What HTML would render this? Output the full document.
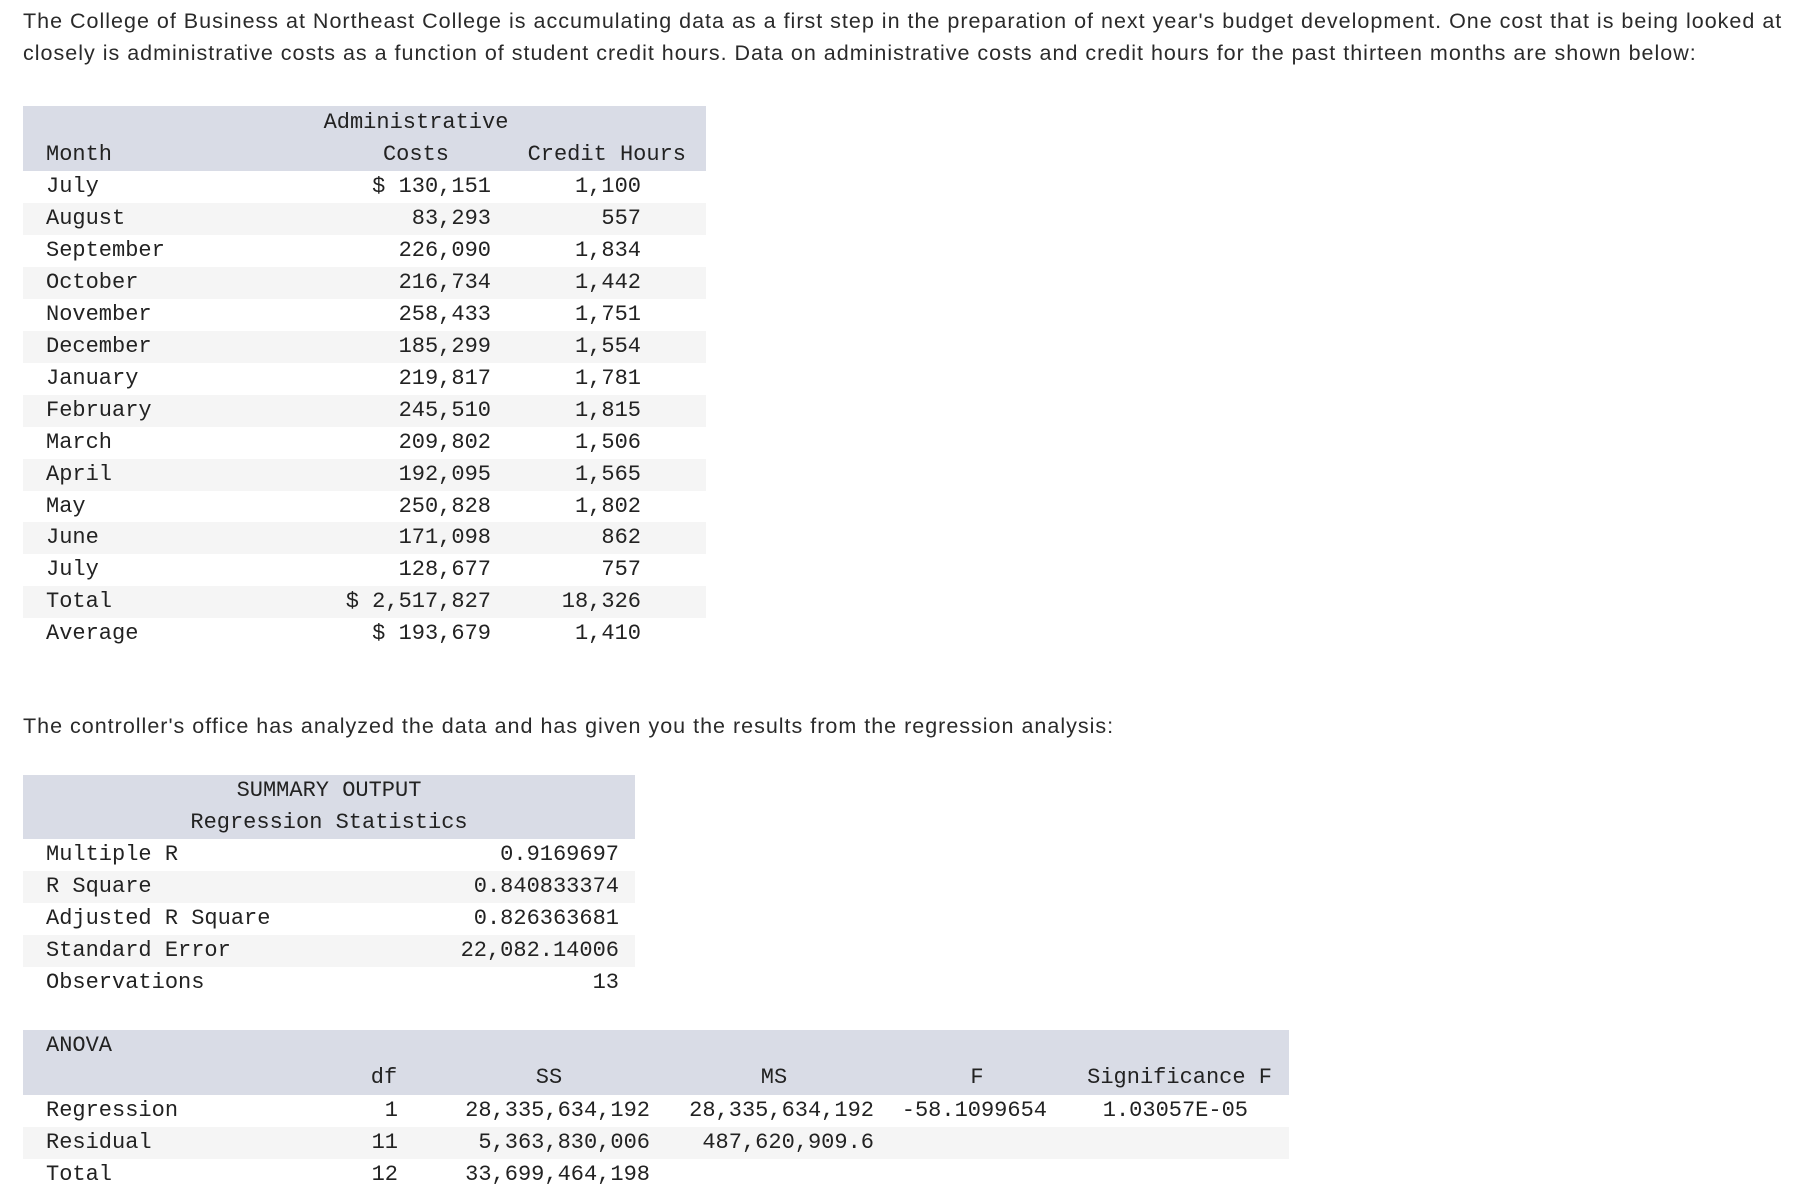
<!DOCTYPE html>
<html><head><meta charset="utf-8"><style>
body{margin:0;width:1798px;height:1202px;background:#fff;position:relative;overflow:hidden;color:#222}
.p{position:absolute;left:23px;font-family:"Liberation Sans",Arial,sans-serif;font-size:21.5px;letter-spacing:1px;white-space:nowrap;color:#2a2a2a}
.t{position:absolute;font-family:"Liberation Mono","DejaVu Sans Mono",monospace;font-size:22px;color:#222}
.r{position:absolute;left:0;right:0;height:32px;line-height:32px}
.h{background:#d9dce6}
.g{background:#f5f5f5}
.c{position:absolute;top:0;white-space:pre}
</style></head><body>
<div class="p" style="top:9px">The College of Business at Northeast College is accumulating data as a first step in the preparation of next year's budget development. One cost that is being looked at</div>
<div class="p" style="top:41px">closely is administrative costs as a function of student credit hours. Data on administrative costs and credit hours for the past thirteen months are shown below:</div>

<div class="t" style="left:23px;top:106px;width:683px;height:545px">
<div class="r h" style="top:0;height:65px"></div>
<div class="c" style="left:243px;width:300px;text-align:center;top:1px;line-height:32px">Administrative</div>
<div class="c" style="left:23px;top:33px;line-height:32px">Month</div>
<div class="c" style="left:243px;width:300px;text-align:center;top:33px;line-height:32px">Costs</div>
<div class="c" style="right:20px;top:33px;line-height:32px">Credit Hours</div>
<div id="rows"></div>
</div>

<div class="p" style="top:714px">The controller's office has analyzed the data and has given you the results from the regression analysis:</div>

<div class="t" style="left:23px;top:775px;width:612px;height:230px">
<div class="r h" style="top:0;height:64px"></div>
<div class="c" style="left:0;width:612px;text-align:center;top:0;line-height:32px">SUMMARY OUTPUT</div>
<div class="c" style="left:0;width:612px;text-align:center;top:32px;line-height:32px">Regression Statistics</div>
<div id="rows2"></div>
</div>

<div class="t" style="left:23px;top:1030px;width:1266px;height:165px">
<div class="r h" style="top:0;height:65px"></div>
<div class="c" style="left:23px;top:0;line-height:32px">ANOVA</div>
<div class="c" style="left:331px;width:60px;text-align:center;top:32px;line-height:32px">df</div>
<div class="c" style="left:476px;width:100px;text-align:center;top:32px;line-height:32px">SS</div>
<div class="c" style="left:701px;width:100px;text-align:center;top:32px;line-height:32px">MS</div>
<div class="c" style="left:904px;width:100px;text-align:center;top:32px;line-height:32px">F</div>
<div class="c" style="right:17px;top:32px;line-height:32px">Significance F</div>
<div id="rows3"></div>
</div>

<script>
var d=[["July","$ 130,151","1,100"],["August","83,293","557"],["September","226,090","1,834"],["October","216,734","1,442"],["November","258,433","1,751"],["December","185,299","1,554"],["January","219,817","1,781"],["February","245,510","1,815"],["March","209,802","1,506"],["April","192,095","1,565"],["May","250,828","1,802"],["June","171,098","862"],["July","128,677","757"],["Total","$ 2,517,827","18,326"],["Average","$ 193,679","1,410"]];
var h="";d.forEach(function(r,i){h+='<div class="r'+(i%2?' g':'')+'" style="top:'+(65+i*31.95).toFixed(1)+'px"><span class="c" style="left:23px">'+r[0]+'</span><span class="c" style="right:215px">'+r[1]+'</span><span class="c" style="right:65px">'+r[2]+'</span></div>'});
document.getElementById("rows").outerHTML=h;
var e=[["Multiple R","0.9169697"],["R Square","0.840833374"],["Adjusted R Square","0.826363681"],["Standard Error","22,082.14006"],["Observations","13"]];
h="";e.forEach(function(r,i){h+='<div class="r'+(i%2?' g':'')+'" style="top:'+(64+i*32)+'px"><span class="c" style="left:23px">'+r[0]+'</span><span class="c" style="right:16px">'+r[1]+'</span></div>'});
document.getElementById("rows2").outerHTML=h;
var f=[["Regression","1","28,335,634,192","28,335,634,192","-58.1099654","1.03057E-05"],["Residual","11","5,363,830,006","487,620,909.6","",""],["Total","12","33,699,464,198","","",""]];
var R=[891,639,415,242,41];
h="";f.forEach(function(r,i){h+='<div class="r'+(i%2?' g':'')+'" style="top:'+(65+i*32)+'px"><span class="c" style="left:23px">'+r[0]+'</span>';for(var k=1;k<6;k++)h+='<span class="c" style="right:'+R[k-1]+'px">'+r[k]+'</span>';h+='</div>'});
document.getElementById("rows3").outerHTML=h;
</script>
</body></html>
